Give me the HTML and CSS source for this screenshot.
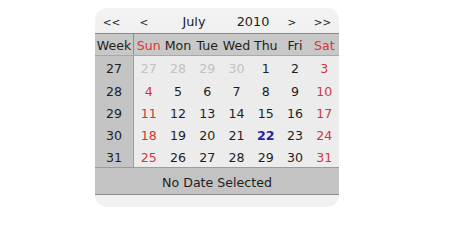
FILE: index.html
```html
<!DOCTYPE html>
<html>
<head>
<meta charset="utf-8">
<link rel="stylesheet" href="styles.css">
</head>
<body>
<div class="cal">
  <div class="nav">
    <span>&lt;&lt;</span>
    <span>&lt;</span>
    <span>July</span>
    <span>2010</span>
    <span>&gt;</span>
    <span>&gt;&gt;</span>
  </div>
  <div class="row head">
    <div class="wk">Week</div>
    <div class="we">Sun</div>
    <div>Mon</div>
    <div>Tue</div>
    <div>Wed</div>
    <div>Thu</div>
    <div>Fri</div>
    <div class="we">Sat</div>
  </div>
  <div class="body">
    <div class="row">
      <div class="wk">27</div>
      <div class="other">27</div><div class="other">28</div><div class="other">29</div><div class="other">30</div>
      <div>1</div><div>2</div><div class="we">3</div>
    </div>
    <div class="row">
      <div class="wk">28</div>
      <div class="we">4</div><div>5</div><div>6</div><div>7</div><div>8</div><div>9</div><div class="we">10</div>
    </div>
    <div class="row">
      <div class="wk">29</div>
      <div class="we">11</div><div>12</div><div>13</div><div>14</div><div>15</div><div>16</div><div class="we">17</div>
    </div>
    <div class="row">
      <div class="wk">30</div>
      <div class="we">18</div><div>19</div><div>20</div><div>21</div><div class="today">22</div><div>23</div><div class="we">24</div>
    </div>
    <div class="row">
      <div class="wk">31</div>
      <div class="we">25</div><div>26</div><div>27</div><div>28</div><div>29</div><div>30</div><div class="we">31</div>
    </div>
  </div>
  <div class="foot">No Date Selected</div>
</div>
</body>
</html>
```
FILE: styles.css
```css
html, body {
  margin: 0;
  padding: 0;
  background: #ffffff;
}
body {
  font-family: "DejaVu Sans", "Liberation Sans", sans-serif;
  font-size: 12.6px;
  color: #1e1e1e;
}
.cal {
  margin: 8px 0 0 95px;
  width: 244px;
  height: 199px;
  border-radius: 12px;
  background: linear-gradient(#f3f3f3, #ebebeb 30%, #ececec 85%, #f2f2f2);
  overflow: hidden;
}
.nav {
  display: grid;
  grid-template-columns: 33px 32px 68px 50px 28px 33px;
  height: 25px;
  align-items: center;
  text-align: center;
  padding-top: 2px;
  box-sizing: border-box;
  font-size: 12.8px;
}
.nav span:nth-child(1), .nav span:nth-child(2), .nav span:nth-child(5), .nav span:nth-child(6) {
  font-size: 10.5px;
}
.row {
  display: grid;
  grid-template-columns: 39px repeat(7, 1fr);
  height: 22px;
  align-items: stretch;
  text-align: center;
}
.row > div {
  display: flex;
  align-items: center;
  justify-content: center;
}
.body .row > div {
  padding-top: 2px;
  box-sizing: border-box;
}
.head {
  height: 23px;
  background: #c8c8c8;
  border-top: 1px solid #8a8a8a;
  border-bottom: 1px solid #a9a9a9;
  box-sizing: border-box;
  font-size: 12.6px;
}
.head > div {
  padding-top: 1px;
  box-sizing: border-box;
}
.wk {
  background: #c4c4c4;
  border-right: 1px solid #9a9a9a;
}
.head .wk {
  background: #c8c8c8;
  border-right: 1px solid #8e8e8e;
}
.body {
  background: #ececec;
}
.body .row:first-child {
  height: 23px;
}
.we {
  color: #d03838;
}
.head .we {
  color: #e03434;
}
.other {
  color: #c2c2c2;
}
.today {
  color: #2323a8;
  font-weight: bold;
}
.foot {
  height: 28px;
  background: #c3c3c3;
  border-top: 1px solid #9c9c9c;
  border-bottom: 1px solid #8e8e8e;
  box-sizing: border-box;
  display: flex;
  align-items: center;
  justify-content: center;
  font-size: 12.6px;
  padding-top: 2px;
}
```
